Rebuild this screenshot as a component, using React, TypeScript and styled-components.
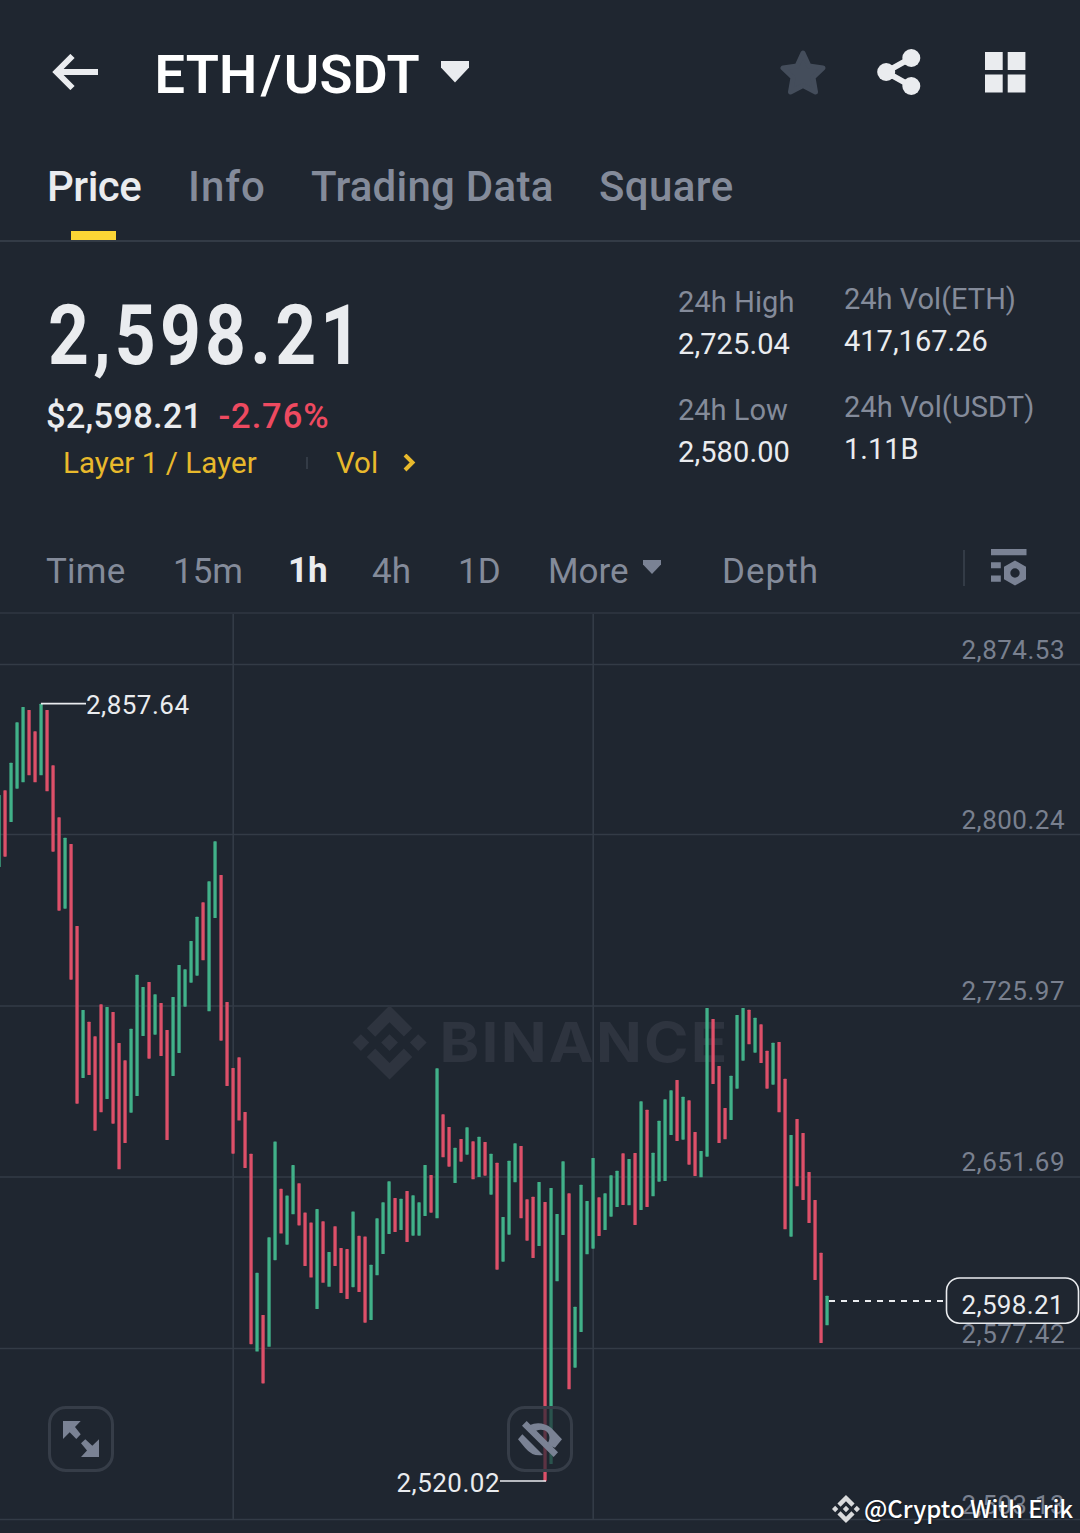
import React from "react";
import styled, { createGlobalStyle } from "styled-components";

const color = {
  bg: "#1f2630",
  text: "#eaecef",
  muted: "#848b9a",
  icon: "#7a8294",
  line: "#333b46",
  lineSoft: "#2b323d",
  up: "#41b189",
  down: "#dd5069",
  loss: "#ee4a60",
  brand: "#fcd535",
  link: "#e8b92c",
};

const GlobalStyle = createGlobalStyle`
  body { margin: 0; background: ${color.bg}; }
  * { box-sizing: border-box; }
`;

const Screen = styled.main`
  display: flex;
  flex-direction: column;
  width: 1080px;
  height: 1533px;
  overflow: hidden;
  background: ${color.bg};
  color: ${color.text};
  font-family: Roboto, "Liberation Sans", sans-serif;
  white-space: nowrap;
`;

const Icon = styled.svg`
  display: block;
  flex: none;
`;

/* ---------- header ---------- */

const Header = styled.header`
  display: flex;
  align-items: center;
  height: 144px;
  padding: 0 54px 0 52px;
`;

const Pair = styled.h1<{ $spacing: number }>`
  flex: 0 0 286px;
  margin: 5px 0 0 55.5px;
  font-size: 54px;
  line-height: 64px;
  font-weight: 600;
  letter-spacing: ${(p) => p.$spacing}px;
  color: #fff;
`;

const Slash = styled.span`
  font-weight: 500;
  margin: 0 2px 0 3px;
`;

const Actions = styled.div`
  display: flex;
  align-items: center;
  margin-left: auto;
`;

const ActionButton = styled.button<{ $gap?: number }>`
  padding: 0;
  border: 0;
  background: none;
  margin-left: ${(p) => p.$gap ?? 0}px;
`;

/* ---------- tabs ---------- */

const Tabs = styled.nav`
  display: grid;
  grid-template-columns: 141px 123px 288px 1fr;
  height: 98px;
  padding: 0 0 0 47px;
  border-bottom: 2px solid ${color.line};
`;

const Tab = styled.a<{ $active?: boolean; $spacing?: number }>`
  display: flex;
  flex-direction: column;
  justify-content: space-between;
  padding-top: 18px;
  font-size: 42px;
  line-height: 50px;
  font-weight: 500;
  letter-spacing: ${(p) => p.$spacing ?? 0}px;
  color: ${(p) => (p.$active ? color.text : color.muted)};

  &::after {
    content: "";
    width: 45px;
    height: 9px;
    margin-left: 24px;
    background: ${(p) => (p.$active ? color.brand : "transparent")};
  }
`;

/* ---------- quote ---------- */

const Quote = styled.section`
  display: flex;
  height: 286px;
`;

const QuoteMain = styled.div`
  flex: 0 0 678px;
  padding: 58px 0 0 46px;
`;

const LastPrice = styled.div`
  width: 420px;
  margin-left: 1.5px;
  font-size: 84px;
  line-height: 72px;
  font-weight: 700;
  letter-spacing: 4.9px;
  transform: scaleX(0.85);
  transform-origin: left;
`;

const SubRow = styled.div`
  display: flex;
  margin-top: 24px;
  font-size: 34.5px;
  line-height: 40px;
  font-weight: 500;
`;

const FiatPrice = styled.span`
  flex: 0 0 172.5px;
  letter-spacing: 0.2px;
`;

const Change = styled.span`
  letter-spacing: 0.9px;
  color: ${color.loss};
`;

const Tags = styled.div`
  display: flex;
  align-items: center;
  margin-top: 11px;
  padding-left: 17px;
  height: 32px;
  font-size: 29.5px;
  line-height: 32px;
  color: ${color.link};
`;

const Tag = styled.span<{ $width: number; $spacing?: number }>`
  flex: 0 0 ${(p) => p.$width}px;
  letter-spacing: ${(p) => p.$spacing ?? 0}px;
`;

const Divider = styled.i<{ $height: number; $after: number }>`
  width: 2px;
  height: ${(p) => p.$height}px;
  margin-right: ${(p) => p.$after}px;
  background: ${color.line};
`;

const StatColumn = styled.dl<{ $width: number; $top: number }>`
  flex: 0 0 ${(p) => p.$width}px;
  display: flex;
  flex-direction: column;
  gap: 24px;
  margin: 0;
  padding-top: ${(p) => p.$top}px;
`;

const Stat = styled.div`
  font-size: 29px;
  line-height: 42px;
`;

const StatLabel = styled.dt<{ $spacing: number }>`
  color: ${color.muted};
  letter-spacing: ${(p) => p.$spacing}px;
`;

const StatValue = styled.dd<{ $spacing: number }>`
  margin: 0;
  letter-spacing: ${(p) => p.$spacing}px;
`;

/* ---------- intervals ---------- */

const Intervals = styled.div`
  display: flex;
  align-items: center;
  height: 86px;
  padding: 0 53px 0 46px;
  border-bottom: 2px solid ${color.lineSoft};
`;

const Interval = styled.button<{ $width: number; $active?: boolean; $spacing?: number }>`
  display: flex;
  align-items: center;
  flex: 0 0 ${(p) => p.$width}px;
  padding: 0;
  margin-top: ${(p) => (p.$active ? 1 : 3)}px;
  border: 0;
  background: none;
  font: inherit;
  font-size: 35px;
  line-height: 42px;
  font-weight: ${(p) => (p.$active ? 700 : 400)};
  letter-spacing: ${(p) => p.$spacing ?? 0}px;
  color: ${(p) => (p.$active ? color.text : color.muted)};
`;

const IntervalLabel = styled.span`
  flex: 0 0 95px;
  text-align: left;
`;

const Caret = styled(Icon)`
  margin-bottom: 9px;
`;

const Tools = styled.div`
  display: flex;
  align-items: center;
  margin: -5px 0 0 auto;
`;

/* ---------- chart ---------- */

const ChartArea = styled.section`
  position: relative;
  height: 919px;
`;

const Canvas = styled.svg`
  display: block;
`;

const Overlay = styled.button<{ $left: number }>`
  position: absolute;
  left: ${(p) => p.$left}px;
  top: 792px;
  display: grid;
  place-items: center;
  width: 66px;
  height: 66px;
  padding: 0;
  border: 3px solid #363d48;
  border-radius: 18px;
  background: rgba(31, 38, 48, 0.68);
`;

const Signature = styled.div`
  position: absolute;
  left: 832px;
  bottom: 5px;
  display: flex;
  align-items: center;
  gap: 4px;
  height: 38px;
  font-family: "Noto Sans CJK SC", sans-serif;
  font-size: 24px;
  line-height: 38px;
  font-weight: 500;
  color: #fff;
  text-shadow: 0 1px 2px rgba(0, 0, 0, 0.5);
`;

const Handle = styled.span`
  margin-top: -3px;
`;

const LOGO =
  "M16.624 13.9202l2.7175 2.7154-7.353 7.353-7.353-7.352 2.7175-2.7164 4.6355 4.6595 4.6356-4.6595zm4.6366-4.6366L24 12l-2.7154 2.7164L18.5682 12l2.6924-2.7164zm-9.272.001l2.7163 2.6914-2.7164 2.7174v-.001L9.2721 12l2.7164-2.7154zm-9.2722-.001L5.4088 12l-2.6914 2.6924L0 12l2.7164-2.7164zM11.9885.0115l7.353 7.329-2.7174 2.7154-4.6356-4.6356-4.6355 4.6595-2.7174-2.7154 7.353-7.353z";

/* Hourly ranges, oldest first: direction, high and low in canvas units. */
type Candle = ["u" | "d", number, number];

const candles: Candle[] = [
  ["u", 795, 867], ["d", 790.3, 856.7], ["u", 762.7, 822], ["u", 722.3, 788.7], ["u", 707, 782.3],
  ["d", 710, 775.3], ["d", 731.3, 782.3], ["u", 703.7, 775.3], ["d", 710, 791.3], ["d", 765.3, 851.7],
  ["d", 817.3, 910.7], ["u", 837.7, 908.7], ["d", 844, 979.7], ["d", 926, 1103.7], ["u", 1010, 1078],
  ["d", 1021.7, 1075], ["d", 1036.3, 1130.7], ["d", 1004.3, 1112.3], ["u", 1007, 1099], ["d", 1012, 1123.7],
  ["d", 1043, 1169.3], ["d", 1060.3, 1143], ["u", 1028.7, 1112.7], ["u", 974.7, 1096], ["u", 987, 1036],
  ["d", 982, 1058.7], ["u", 994.3, 1034.7], ["d", 1003, 1056], ["d", 1030, 1140], ["u", 997, 1076],
  ["u", 965, 1053], ["u", 969.3, 1006.7], ["u", 941, 982.7], ["u", 916.7, 975.7], ["d", 902.3, 960.3],
  ["u", 881.3, 1011.3], ["u", 841.3, 918], ["d", 875, 1040.7], ["d", 1002, 1086], ["d", 1068, 1153.7],
  ["d", 1057.3, 1120.5], ["d", 1111.9, 1168.1], ["d", 1153.7, 1344.2], ["u", 1272.8, 1351.6], ["d", 1314.9, 1383.4],
  ["u", 1237.3, 1346.8], ["u", 1141.4, 1260.2], ["d", 1188.8, 1233.6], ["u", 1195.5, 1244.7], ["u", 1165.1, 1214.3],
  ["d", 1183.2, 1225.4], ["d", 1212.5, 1266.1], ["d", 1222.5, 1277.6], ["u", 1209.1, 1309], ["d", 1221.3, 1282.8],
  ["u", 1252, 1286.8], ["d", 1226.2, 1266.1], ["d", 1248, 1293.1], ["d", 1249.1, 1299], ["u", 1211.4, 1287.2],
  ["d", 1235.8, 1292], ["d", 1236.5, 1322.7], ["u", 1264.7, 1320], ["u", 1218.3, 1275.3], ["u", 1202.3, 1254],
  ["u", 1181.3, 1234], ["d", 1198, 1232], ["u", 1198.7, 1230], ["d", 1191, 1242], ["u", 1195.3, 1235.7],
  ["u", 1202.3, 1235.7], ["u", 1165, 1216], ["d", 1175, 1212.7], ["u", 1068.3, 1218.3], ["d", 1114.3, 1157.3],
  ["d", 1127, 1166.7], ["u", 1147.7, 1183], ["d", 1139, 1161.7], ["u", 1127.3, 1154.7], ["d", 1141.3, 1179.3],
  ["u", 1136.7, 1177], ["d", 1142, 1175.7], ["u", 1153.7, 1194.7], ["d", 1162.7, 1269.7], ["u", 1217, 1261.7],
  ["u", 1160.7, 1234.7], ["u", 1143.3, 1182.3], ["d", 1146, 1218.3], ["d", 1199.3, 1240.7], ["d", 1196.7, 1258],
  ["u", 1182, 1246], ["d", 1202, 1481.3], ["u", 1188, 1464], ["u", 1214, 1281.3], ["u", 1161.3, 1235],
  ["d", 1193.3, 1389.3], ["u", 1306.7, 1367.7], ["u", 1184.7, 1332], ["u", 1201, 1254.3], ["u", 1158, 1248.7],
  ["d", 1197.3, 1236], ["u", 1193.3, 1230], ["u", 1175.3, 1216.7], ["u", 1170.7, 1207], ["d", 1153.3, 1205],
  ["u", 1159, 1205.3], ["d", 1153, 1225], ["u", 1101.3, 1210], ["d", 1109.7, 1207], ["u", 1152.7, 1196.3],
  ["u", 1120.7, 1181.7], ["u", 1099.3, 1181], ["u", 1090.3, 1135], ["d", 1080, 1141], ["u", 1096.7, 1139.7],
  ["d", 1100.3, 1164.7], ["d", 1132, 1176], ["u", 1151, 1177.3], ["u", 1008, 1156.7], ["d", 1019, 1084],
  ["d", 1066, 1143], ["d", 1108, 1139.3], ["u", 1075.7, 1120], ["u", 1015, 1088.7], ["u", 1008, 1060.7],
  ["d", 1009.7, 1044.3], ["u", 1017.7, 1052.7], ["d", 1024.3, 1063], ["d", 1050.7, 1088.7], ["u", 1042.7, 1084.7],
  ["d", 1042, 1112.3], ["d", 1078.7, 1229.3], ["u", 1135, 1236.7], ["d", 1119, 1186.3], ["d", 1133, 1200],
  ["d", 1172, 1223], ["d", 1200, 1280], ["d", 1252.7, 1343], ["u", 1295.7, 1325.3],
];

const gridRows = [
  { y: 664.5, price: "2,874.53" },
  { y: 834.5, price: "2,800.24" },
  { y: 1006, price: "2,725.97" },
  { y: 1177, price: "2,651.69" },
  { y: 1348.5, price: "2,577.42" },
  { y: 1519.5, price: "2,503.13" },
];

function PriceText(props: { x: number; y: number; width: number; fill: string; children: string }) {
  return (
    <text
      x={props.x}
      y={props.y}
      fill={props.fill}
      fontSize={26}
      textLength={props.width}
      fontFamily="Roboto, sans-serif"
    >
      {props.children}
    </text>
  );
}

function Chart() {
  return (
    <ChartArea>
      <Canvas width="1080" height="919" viewBox="0 614 1080 919">
        <g stroke={color.line} strokeWidth="1.6">
          {[233.2, 593.2].map((x) => (
            <line key={x} x1={x} x2={x} y1="614" y2="1520" />
          ))}
          {gridRows.map((row) => (
            <line key={row.y} x1="0" x2="1080" y1={row.y} y2={row.y} />
          ))}
        </g>
        <g fill="#2e343f">
          <path transform="translate(352.5 1005.5) scale(3.09)" d={LOGO} />
          <text
            x="439.5"
            y="1062.3"
            fontSize="55"
            fontWeight="700"
            fontFamily="Inter, sans-serif"
            letterSpacing="2"
            textLength="290"
            lengthAdjust="spacingAndGlyphs"
          >
            BINANCE
          </text>
        </g>
        {gridRows.map((row) => (
          <PriceText key={row.price} x={961.5} y={Math.floor(row.y - 5.5)} width={103} fill="#79808f">
            {row.price}
          </PriceText>
        ))}
        {candles.map(([dir, high, low], i) => (
          <rect
            key={i}
            x={i * 6 - 2.6}
            y={high}
            width="3.3"
            height={low - high}
            rx="0.6"
            fill={dir === "u" ? color.up : color.down}
          />
        ))}
        <path d="M41 703.6H86M500 1481H546" stroke={color.text} strokeWidth="1.6" />
        <PriceText x={86} y={714} width={103} fill={color.text}>
          2,857.64
        </PriceText>
        <PriceText x={396.5} y={1492} width={103} fill={color.text}>
          2,520.02
        </PriceText>
        <line x1="829" x2="944" y1="1301" y2="1301" stroke={color.text} strokeWidth="1.8" strokeDasharray="6 6" />
        <rect
          x="946.5"
          y="1278"
          width="132"
          height="45.2"
          rx="13"
          fill={color.bg}
          stroke={color.text}
          strokeWidth="1.6"
        />
        <PriceText x={961.5} y={1314} width={102} fill={color.text}>
          2,598.21
        </PriceText>
      </Canvas>

      <Overlay $left={48} aria-label="Full screen">
        <Icon width="36" height="36" viewBox="0 0 36 36" fill={color.icon}>
          <path d="M0 0H17.7L12 6L17.7 13.3L13.3 18L6.7 11.3L0 18Z" />
          <path d="M36 36H18L24 29.5L18 22.3L22.3 18.3L29.3 24.7L36 18.3Z" />
        </Icon>
      </Overlay>
      <Overlay $left={507} aria-label="Hide orders">
        <Icon width="44" height="36" viewBox="534 1322 132 108" fill={color.icon}>
          <path d="M560 1322L654 1416L641 1430L546 1336Z" />
          <path
            fillRule="evenodd"
            d="M568 1335Q602 1320 634 1343L666 1377L645 1402L634 1398L590 1354ZM588 1351L624 1387C638 1364 618 1340 588 1351Z"
          />
          <path d="M547 1362L609 1424Q578 1430 555 1402L534 1377Z" />
        </Icon>
      </Overlay>

      <Signature>
        <Icon width="28" height="28" viewBox="0 0 24 24" fill="#d9dadc">
          <path d={LOGO} />
        </Icon>
        <Handle>@Crypto With Erik</Handle>
      </Signature>
    </ChartArea>
  );
}

export default function App() {
  return (
    <Screen>
      <GlobalStyle />
      <Header>
        <Icon width="47" height="36" viewBox="0 0 47 36" fill="none" stroke={color.text} strokeWidth="6">
          <path d="M20.5 2L4.5 18L20.5 34M4 18H46" />
        </Icon>
        <Pair $spacing={0.2}>
          ETH<Slash>/</Slash>USDT
        </Pair>
        <Icon width="28" height="22" viewBox="0 0 28 22" fill={color.text}>
          <path d="M0 0H28V6.5L14 21.5L0 6.5Z" />
        </Icon>
        <Actions>
          <ActionButton aria-label="Favourite">
            <Icon width="46" height="46" viewBox="0 0 46 46" fill="#444d5b" stroke="#444d5b" strokeWidth="5" strokeLinejoin="round">
              <path d="M23 4L29 17L43 19L33 28.5L35.5 43L23 36.5L10.5 43L13 28.5L3 19L17 17Z" />
            </Icon>
          </ActionButton>
          <ActionButton $gap={51} aria-label="Share">
            <Icon width="44" height="46" viewBox="0 0 44 46" fill={color.text}>
              <path d="M34 9L9 23L34 37" fill="none" stroke={color.text} strokeWidth="6" />
              <circle cx="9.2" cy="23" r="9" />
              <circle cx="34.3" cy="9" r="9" />
              <circle cx="34.3" cy="37" r="9" />
            </Icon>
          </ActionButton>
          <ActionButton $gap={64} aria-label="Layout">
            <Icon width="41" height="41" viewBox="0 0 41 41" fill={color.text}>
              <path d="M0 0H17.7V18H0ZM22.7 0H40.4V18H22.7ZM0 22.6H17.7V40.6H0ZM22.7 22.6H40.4V40.6H22.7Z" />
            </Icon>
          </ActionButton>
        </Actions>
      </Header>

      <Tabs>
        <Tab $active $spacing={-0.5}>Price</Tab>
        <Tab $spacing={1}>Info</Tab>
        <Tab $spacing={0.25}>Trading Data</Tab>
        <Tab $spacing={0.4}>Square</Tab>
      </Tabs>

      <Quote>
        <QuoteMain>
          <LastPrice>2,598.21</LastPrice>
          <SubRow>
            <FiatPrice>$2,598.21</FiatPrice>
            <Change>-2.76%</Change>
          </SubRow>
          <Tags>
            <Tag $width={243} $spacing={0.05}>Layer 1 / Layer</Tag>
            <Divider $height={12} $after={28} />
            <Tag $width={67}>Vol</Tag>
            <Icon width="13" height="18" viewBox="0 0 13 18" fill="none" stroke={color.link} strokeWidth="4">
              <path d="M2 1L9.5 8.5L2 16" />
            </Icon>
          </Tags>
        </QuoteMain>
        <StatColumn $width={166} $top={39}>
          <Stat>
            <StatLabel $spacing={0.1}>24h High</StatLabel>
            <StatValue $spacing={0.1}>2,725.04</StatValue>
          </Stat>
          <Stat>
            <StatLabel $spacing={0}>24h Low</StatLabel>
            <StatValue $spacing={0.1}>2,580.00</StatValue>
          </Stat>
        </StatColumn>
        <StatColumn $width={220} $top={36}>
          <Stat>
            <StatLabel $spacing={0}>24h Vol(ETH)</StatLabel>
            <StatValue $spacing={0}>417,167.26</StatValue>
          </Stat>
          <Stat>
            <StatLabel $spacing={0.1}>24h Vol(USDT)</StatLabel>
            <StatValue $spacing={0}>1.11B</StatValue>
          </Stat>
        </StatColumn>
      </Quote>

      <Intervals>
        <Interval $width={127} $spacing={0.2}>Time</Interval>
        <Interval $width={115}>15m</Interval>
        <Interval $width={84} $active>1h</Interval>
        <Interval $width={86}>4h</Interval>
        <Interval $width={90}>1D</Interval>
        <Interval $width={174}>
          <IntervalLabel>More</IntervalLabel>
          <Caret width="18" height="14" viewBox="0 0 18 14" fill={color.icon}>
            <path d="M0 0H18V4.5L9 14L0 4.5Z" />
          </Caret>
        </Interval>
        <Interval $width={110} $spacing={1}>Depth</Interval>
        <Tools>
          <Divider $height={36} $after={26} />
          <Icon width="36" height="37" viewBox="0 0 36 37" fill={color.icon}>
            <path d="M0 0H35.5V6.3H0ZM0 13.3H9.8V19.3H0ZM0 26.5H9.8V32.7H0Z" />
            <path
              fillRule="evenodd"
              d="M24 11.5L35 17.7V30.3L24 36.5L13 30.3V17.7ZM24 19.3A4.7 4.7 0 1 0 24 28.7A4.7 4.7 0 1 0 24 19.3Z"
            />
          </Icon>
        </Tools>
      </Intervals>

      <Chart />
    </Screen>
  );
}
